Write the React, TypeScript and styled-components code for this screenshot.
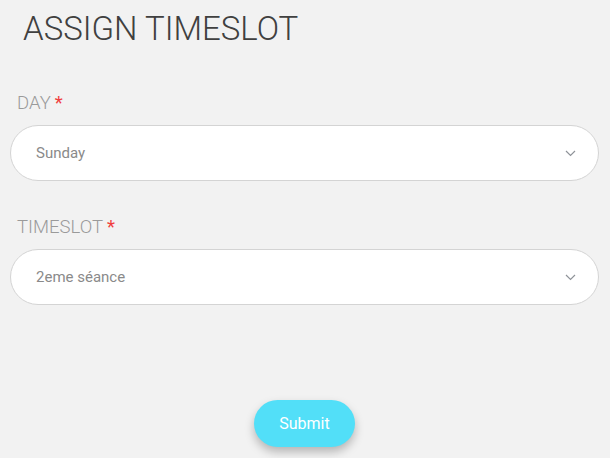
import React from "react";
import styled, { createGlobalStyle } from "styled-components";

const GlobalStyle = createGlobalStyle`
  html, body {
    margin: 0;
    padding: 0;
    background: #f2f2f2;
    font-family: Roboto, "Liberation Sans", sans-serif;
  }
  * {
    box-sizing: border-box;
  }
`;

function Chevron() {
  return (
    <svg width="11" height="7" viewBox="0 0 11 7" fill="none">
      <path d="M1 1l4.5 4.5L10 1" stroke="#8f9399" strokeWidth="1.2" />
    </svg>
  );
}

function SelectField({ label, value }: { label: string; value: string }) {
  return (
    <Field>
      <Label>
        {label}
        <Required>*</Required>
      </Label>
      <Select>
        <SelectValue>{value}</SelectValue>
        <Chevron />
      </Select>
    </Field>
  );
}

function App() {
  return (
    <>
      <GlobalStyle />
      <Page>
        <Title>ASSIGN TIMESLOT</Title>
        <Form>
          <SelectField label="DAY" value="Sunday" />
          <SelectField label="TIMESLOT" value="2eme séance" />
        </Form>
        <Actions>
          <SubmitButton>Submit</SubmitButton>
        </Actions>
      </Page>
    </>
  );
}

const Page = styled.div`
  width: 610px;
  height: 458px;
  padding: 0 11px 0 10px;
  overflow: hidden;
`;

const Title = styled.h1`
  margin: 0;
  padding: 10px 0 0 13px;
  font-size: 33px;
  font-weight: 300;
  line-height: 38px;
  color: #404040;
`;

const Form = styled.div`
  display: flex;
  flex-direction: column;
  gap: 35px;
  margin-top: 44px;
`;

const Field = styled.div`
  display: flex;
  flex-direction: column;
  gap: 11px;
`;

const Label = styled.div`
  padding-left: 7px;
  font-size: 18.5px;
  font-weight: 300;
  line-height: 22px;
  color: #9a9a9a;
`;

const Required = styled.span`
  margin-left: 4px;
  color: #f03e3e;
  font-weight: 400;
`;

const Select = styled.div`
  height: 56px;
  display: flex;
  align-items: center;
  justify-content: space-between;
  padding: 0 22px 0 25px;
  background: #ffffff;
  border: 1px solid #d4d4d4;
  border-radius: 28px;
`;

const SelectValue = styled.span`
  font-size: 15px;
  color: #8a8a8a;
`;

const Actions = styled.div`
  display: flex;
  justify-content: center;
  margin-top: 95px;
`;

const SubmitButton = styled.button`
  width: 101px;
  height: 47px;
  border: none;
  border-radius: 24px;
  background: #52dff8;
  color: #ffffff;
  font-family: Roboto, "Liberation Sans", sans-serif;
  font-size: 16px;
  box-shadow: 0 5px 10px rgba(0, 0, 0, 0.25);
  cursor: pointer;
`;

export default App;
